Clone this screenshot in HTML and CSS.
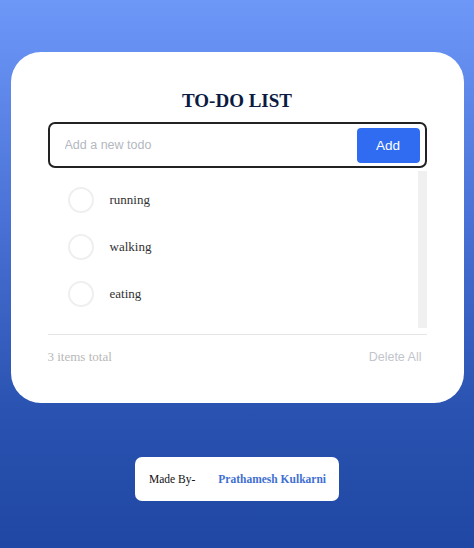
FILE: index.html
```html
<!DOCTYPE html>
<html lang="en">
<head>
<meta charset="utf-8">
<title>To-Do List</title>
<link rel="stylesheet" href="styles.css">
</head>
<body>
  <main class="card">
    <h1 class="title">TO-DO LIST</h1>
    <form class="entry">
      <input class="entry-input" type="text" placeholder="Add a new todo">
      <button class="entry-btn" type="button">Add</button>
    </form>
    <ul class="list">
      <li class="item"><span class="check"></span><span class="item-text">running</span></li>
      <li class="item"><span class="check"></span><span class="item-text">walking</span></li>
      <li class="item"><span class="check"></span><span class="item-text">eating</span></li>
    </ul>
    <div class="footer">
      <span class="count">3 items total</span>
      <button class="delete-all" type="button">Delete All</button>
    </div>
  </main>
  <div class="credit">
    <span class="credit-label">Made By-</span>
    <span class="credit-name">Prathamesh Kulkarni</span>
  </div>
</body>
</html>
```
FILE: styles.css
```css
html, body {
  margin: 0;
  padding: 0;
}
body {
  min-height: 100vh;
  background: linear-gradient(180deg, #6d98f8 0%, #4a72d6 40%, #2a52b0 75%, #1f47a3 100%);
  font-family: "Liberation Serif", "Times New Roman", serif;
  display: flex;
  flex-direction: column;
  align-items: center;
  padding-top: 52px;
  box-sizing: border-box;
}
.card {
  width: 453px;
  height: 351px;
  box-sizing: border-box;
  background: #fff;
  border-radius: 30px;
  padding: 37px 37px 0 37px;
  display: flex;
  flex-direction: column;
}
.title {
  margin: 0;
  text-align: center;
  font-size: 19px;
  font-weight: bold;
  color: #0b1a3f;
  line-height: 24px;
  height: 33px;
}
.entry {
  margin: 0;
  height: 46px;
  box-sizing: border-box;
  border: 2px solid #222;
  border-radius: 7px;
  display: flex;
  align-items: center;
  padding: 0 5px 0 15px;
}
.entry-input {
  flex: 1;
  border: none;
  outline: none;
  background: transparent;
  font-family: "Liberation Sans", Arial, sans-serif;
  font-size: 12.5px;
  color: #333;
  padding: 0;
}
.entry-input::placeholder {
  color: #b4b8c0;
}
.entry-btn {
  width: 63px;
  height: 35px;
  border: none;
  border-radius: 4px;
  background: #2f6cf2;
  color: #fff;
  font-family: "Liberation Sans", Arial, sans-serif;
  font-size: 13.5px;
  padding: 0;
}
.list {
  position: relative;
  list-style: none;
  margin: 3px 0 0 0;
  padding: 16px 0 0 20px;
  height: 157px;
  box-sizing: border-box;
  overflow-y: auto;
  border-right: 9px solid #f0f0f0;
}
.list::before,
.list::after {
  content: "";
  position: absolute;
  right: -6px;
  border-left: 2px solid transparent;
  border-right: 2px solid transparent;
}
.list::before {
  top: 3px;
  border-bottom: 2px solid #a0a0a0;
}
.list::after {
  bottom: 3px;
  border-top: 2px solid #a0a0a0;
}
.item {
  display: flex;
  align-items: center;
  height: 26px;
  margin-bottom: 21px;
}
.check {
  width: 26px;
  height: 26px;
  box-sizing: border-box;
  border: 2px solid #efefef;
  border-radius: 50%;
  flex: none;
}
.item-text {
  margin-left: 16px;
  font-size: 13px;
  color: #333;
}
.footer {
  margin-top: 6px;
  border-top: 1px solid #e6e6e6;
  display: flex;
  justify-content: space-between;
  align-items: center;
  height: 38px;
  padding-top: 3px;
}
.count {
  font-size: 13px;
  color: #b8b8b8;
}
.delete-all {
  border: none;
  background: none;
  padding: 0;
  margin-right: 5px;
  font-family: "Liberation Sans", Arial, sans-serif;
  font-size: 12.5px;
  color: #c2c5cc;
}
.credit {
  margin-top: 54px;
  width: 204px;
  height: 44px;
  box-sizing: border-box;
  background: #fff;
  border-radius: 7px;
  display: flex;
  align-items: center;
  padding-left: 14px;
  font-size: 11.5px;
}
.credit-label {
  color: #111;
}
.credit-name {
  margin-left: 23px;
  font-weight: bold;
  color: #3f6fd2;
}
```
